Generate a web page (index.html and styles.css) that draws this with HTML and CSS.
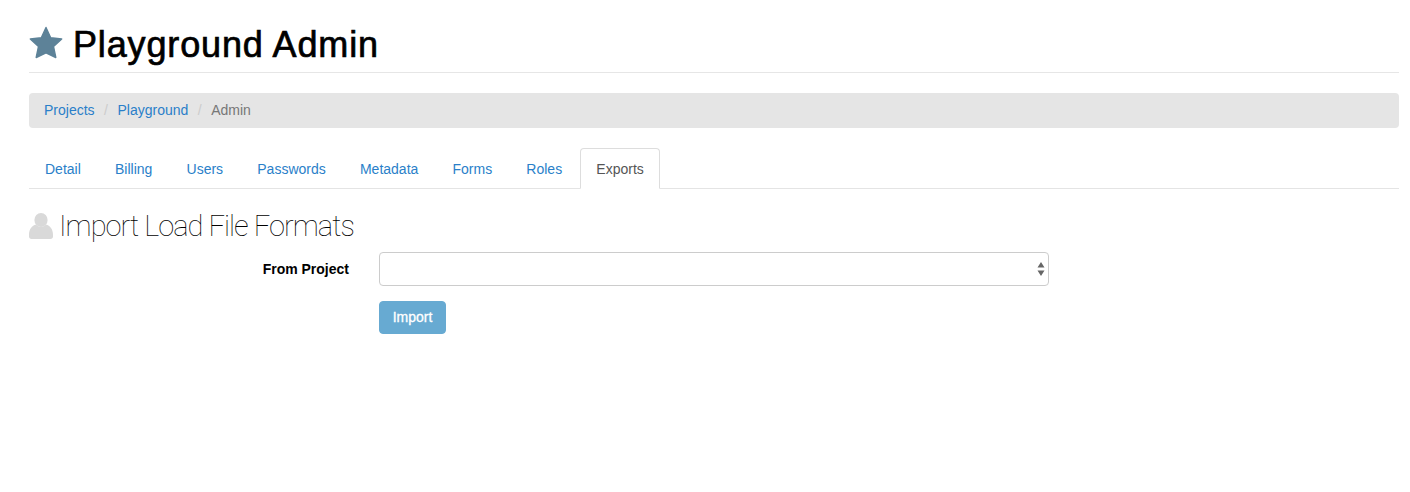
FILE: index.html
```html
<!DOCTYPE html>
<html lang="en">
<head>
<meta charset="utf-8">
<title>Playground Admin</title>
<link rel="stylesheet" href="styles.css">
</head>
<body>
<div class="page">
  <header class="page-header">
    <svg class="star" viewBox="0 0 34 33" aria-hidden="true"><path d="M17 1.500l4.700 10.300 11 1.200-8.200 7.500 2.300 11L17 26.900 7.200 31.500l2.300-11L1.300 13l11-1.200z"/></svg>
    <h1 class="title">Playground Admin</h1>
  </header>
  <nav class="breadcrumb">
    <a href="#">Projects</a><span class="sep">/</span><a href="#">Playground</a><span class="sep">/</span><span class="current">Admin</span>
  </nav>
  <ul class="tabs">
    <li><a href="#">Detail</a></li>
    <li><a href="#">Billing</a></li>
    <li><a href="#">Users</a></li>
    <li><a href="#">Passwords</a></li>
    <li><a href="#">Metadata</a></li>
    <li><a href="#">Forms</a></li>
    <li><a href="#">Roles</a></li>
    <li class="active"><a href="#">Exports</a></li>
  </ul>
  <div class="section-head">
    <svg class="person" viewBox="0 0 24 26" aria-hidden="true"><ellipse cx="12" cy="7" rx="6.600" ry="7"/><path d="M0 22c0-6 3-9.500 7-10.500 1.500 1.500 3 2.300 5 2.300s3.500-.8 5-2.300c4 1 7 4.500 7 10.500v1.500c0 1.500-1 2.500-2.500 2.500h-19C1 26 0 25 0 23.500z"/></svg>
    <h2 class="section-title">Import Load File Formats</h2>
  </div>
  <form class="form">
    <label class="label" for="project">From Project</label>
    <div class="select-wrap">
      <select class="select" id="project"><option></option></select>
      <svg class="arrows" viewBox="0 0 8 14" aria-hidden="true"><path d="M4 0l3.500 5.500H.5zM.5 8.500h7L4 14z"/></svg>
    </div>
    <div class="actions"><button class="btn" type="button">Import</button></div>
  </form>
</div>
</body>
</html>
```

FILE: styles.css
```css
* { box-sizing: border-box; }
html, body { margin: 0; padding: 0; background: #fff; }
body { font-family: "Liberation Sans", Arial, sans-serif; font-size: 14px; line-height: 20px; color: #333; }
a { color: #2a7fc9; text-decoration: none; }
.page { padding: 0 11px 0 29px; }
.page-header { display: flex; align-items: center; gap: 10px; height: 73px; padding-top: 27px; padding-bottom: 9px; border-bottom: 1px solid #e6e6e6; }
.star { width: 34px; height: 33px; fill: #5d8298; stroke: #5d8298; stroke-width: 1.400; stroke-linejoin: round; flex: none; margin-bottom: 5px; }
.title { margin: 0; font-size: 36px; line-height: 40px; font-weight: 400; letter-spacing: 0.86px; color: #000; -webkit-text-stroke: 0.7px #000; }
.breadcrumb { display: flex; height: 35px; margin-top: 20px; padding: 7px 15px; background: #e5e5e5; border-radius: 4px; }
.sep { color: #ccc; padding: 0 9.5px; }
.current { color: #777; }
.tabs { display: flex; list-style: none; margin: 20px 0 0; padding: 0; height: 41px; border-bottom: 1px solid #e4e4e4; }
.tabs li { height: 41px; }
.tabs a { display: block; height: 41px; padding: 10px 15px; margin-right: 2.2px; border: 1px solid transparent; border-radius: 4px 4px 0 0; }
.tabs .active a { color: #555; background: #fff; border-color: #ddd #ddd #fff; padding-right: 15.3px; margin-right: 0; }
.section-head { display: flex; align-items: center; gap: 6px; height: 38px; margin-top: 18px; }
.person { width: 24px; height: 26px; fill: #d9d9d9; flex: none; }
.section-title { margin: 0; font-family: Roboto, "Liberation Sans", sans-serif; font-size: 29px; line-height: 36px; font-weight: 100; letter-spacing: -0.96px; color: #000; }
.form { display: grid; grid-template-columns: 320px 670px; column-gap: 30px; row-gap: 15px; margin-top: 7px; }
.label { font-weight: 700; color: #000; text-align: right; padding-top: 7px; }
.select-wrap { position: relative; height: 34px; }
.select { display: block; width: 100%; height: 34px; appearance: none; -webkit-appearance: none; background: #fff; border: 1px solid #ccc; border-radius: 4px; font: inherit; }
.arrows { position: absolute; right: 4px; top: 10px; width: 8px; height: 14px; fill: #666; pointer-events: none; }
.actions { grid-column: 2; }
.btn { display: block; width: 67px; height: 33px; padding: 0 0 2px; background: #67aad2; border: 1px solid #67aad2; border-radius: 4px; color: #fff; font: inherit; -webkit-text-stroke: 0.3px #fff; }
```
